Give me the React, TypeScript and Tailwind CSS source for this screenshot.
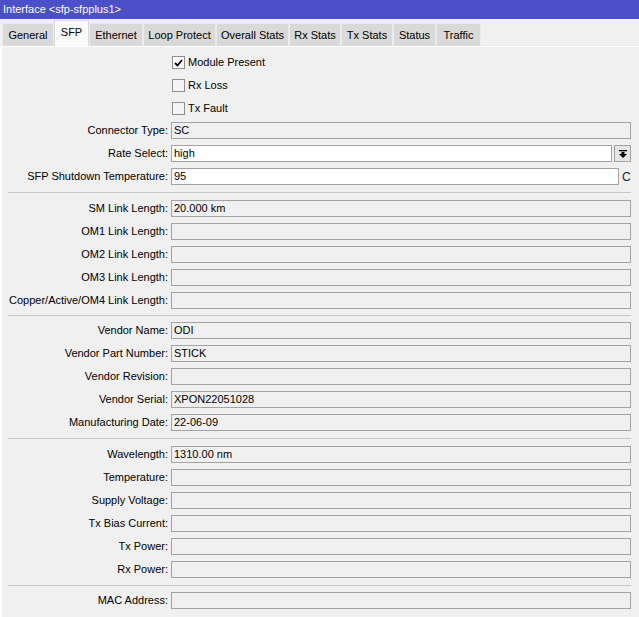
const tabs = [
  { label: "General", w: 52 },
  { label: "SFP", w: 35, active: true },
  { label: "Ethernet", w: 54 },
  { label: "Loop Protect", w: 73 },
  { label: "Overall Stats", w: 73 },
  { label: "Rx Stats", w: 52 },
  { label: "Tx Stats", w: 52 },
  { label: "Status", w: 43 },
  { label: "Traffic", w: 45 },
];

type Field = { label: string; value?: string };

// separator heights differ a pixel or so in the original dialog
const sepHeights = ["h-[9px]", "h-[7px]", "h-[9px]", "h-[8px]"];

const groups: Field[][] = [
  [
    { label: "SM Link Length:", value: "20.000 km" },
    { label: "OM1 Link Length:" },
    { label: "OM2 Link Length:" },
    { label: "OM3 Link Length:" },
    { label: "Copper/Active/OM4 Link Length:" },
  ],
  [
    { label: "Vendor Name:", value: "ODI" },
    { label: "Vendor Part Number:", value: "STICK" },
    { label: "Vendor Revision:" },
    { label: "Vendor Serial:", value: "XPON22051028" },
    { label: "Manufacturing Date:", value: "22-06-09" },
  ],
  [
    { label: "Wavelength:", value: "1310.00 nm" },
    { label: "Temperature:" },
    { label: "Supply Voltage:" },
    { label: "Tx Bias Current:" },
    { label: "Tx Power:" },
    { label: "Rx Power:" },
  ],
  [{ label: "MAC Address:" }],
];

function Row({
  label,
  children,
  className = "",
}: {
  label: string;
  children: React.ReactNode;
  className?: string;
}) {
  return (
    <div className={`flex h-[23px] items-center ${className}`}>
      <div className="w-[166px] shrink-0 whitespace-nowrap text-right">{label}</div>
      <div className="ml-[3px] flex flex-1 items-center">{children}</div>
    </div>
  );
}

function ReadField({ value }: { value?: string }) {
  return (
    <div className="h-[17px] flex-1 border border-[#a3a3a3] bg-[#f0f0f0] pl-[2px] leading-[15px]">
      {value}
    </div>
  );
}

function Check({ label, checked }: { label: string; checked?: boolean }) {
  return (
    <div className="flex h-[23px] items-center pl-[170px]">
      <div
        className={`flex h-[13px] w-[13px] items-center justify-center border border-[#8f8f8f] ${
          checked ? "bg-white" : "bg-[#f4f4f4]"
        }`}
      >
        {checked ? (
          <svg width="9" height="8" viewBox="0 0 9 8">
            <path d="M1 4 L3.5 6.5 L8 1" stroke="#000" strokeWidth="1.8" fill="none" />
          </svg>
        ) : null}
      </div>
      <span className="ml-[3px]">{label}</span>
    </div>
  );
}

function Separator({ h }: { h: string }) {
  return (
    <div className={`flex ${h} items-center pl-[6px]`}>
      <div className="h-px flex-1 bg-[#c8c8c8]" />
    </div>
  );
}

export default function App() {
  return (
    <div
      className="h-[617px] w-[639px] overflow-hidden bg-[#f0f0f0] text-[11px] text-black"
      style={{ fontFamily: '"Liberation Sans", Arial, sans-serif' }}
    >
      <div className="h-[19px] bg-[#4b4fc8] pl-[3px] text-[11px] leading-[19px] text-white">
        Interface &lt;sfp-sfpplus1&gt;
      </div>

      <div className="flex h-[27px] items-end pl-[2px]">
        {tabs.map((t) =>
          t.active ? (
            <div
              key={t.label}
              style={{ width: t.w }}
              className="flex h-[26px] items-center justify-center border border-b-0 border-[#dadada] bg-[#fafafa] pb-[3px] text-[11px]"
            >
              {t.label}
            </div>
          ) : (
            <div
              key={t.label}
              style={{ width: t.w }}
              className="flex h-[23px] items-center justify-center border-x border-t border-[#ebebeb] bg-[#d9d9d9] text-[11px]"
            >
              {t.label}
            </div>
          )
        )}
      </div>

      <div className="h-full border-l-2 border-t border-white pr-[8px] pt-[4px]">
        <Check label="Module Present" checked />
        <Check label="Rx Loss" />
        <Check label="Tx Fault" />
        <Row label="Connector Type:" className="-mt-[1px]">
          <ReadField value="SC" />
        </Row>
        <Row label="Rate Select:">
          <div className="h-[17px] flex-1 border border-[#a3a3a3] bg-white pl-[2px] leading-[15px]">
            high
          </div>
          <div className="ml-[2px] flex h-[17px] w-[17px] items-center justify-center border border-[#a3a3a3] bg-[#e6e6e6]">
            <svg width="8" height="8" viewBox="0 0 8 8">
              <rect x="0" y="0" width="8" height="1.3" fill="#000" />
              <rect x="2.5" y="2" width="3" height="2" fill="#000" />
              <polygon points="0,4 8,4 4,8" fill="#000" />
            </svg>
          </div>
        </Row>
        <Row label="SFP Shutdown Temperature:">
          <div className="h-[17px] flex-1 border border-[#a3a3a3] bg-white pl-[2px] leading-[15px]">
            95
          </div>
          <span className="ml-[3px] w-[9px] text-[12px] text-[#1b1b4b]">C</span>
        </Row>
        {groups.map((g, i) => (
          <div key={i}>
            <Separator h={sepHeights[i]} />
            {g.map((f) => (
              <Row key={f.label} label={f.label}>
                <ReadField value={f.value} />
              </Row>
            ))}
          </div>
        ))}
      </div>
    </div>
  );
}
